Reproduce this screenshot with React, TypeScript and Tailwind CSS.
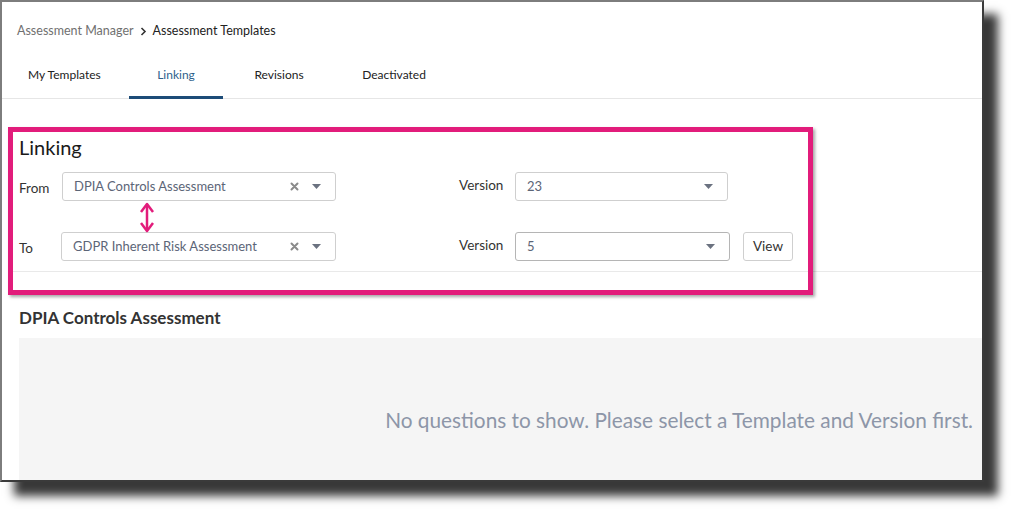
import React from "react";

function Caret() {
  return (
    <svg width="9" height="5" viewBox="0 0 9 5" className="shrink-0">
      <path d="M0 0 H9 L4.5 5 Z" fill="#6b7280" />
    </svg>
  );
}

function Cross() {
  return (
    <svg width="9" height="9" viewBox="0 0 9 9" className="shrink-0">
      <path d="M1.5 1.5 L7.5 7.5 M7.5 1.5 L1.5 7.5" stroke="#8a8a8a" strokeWidth="2" strokeLinecap="round" />
    </svg>
  );
}

function Select({ value, width, clear, darker }: { value: string; width: string; clear?: boolean; darker?: boolean }) {
  return (
    <div
      className={`${width} h-[29px] flex items-center rounded-[3px] border bg-white pl-[11px] pr-[14px] ${
        darker ? "border-[#b5b5b5]" : "border-[#cfcfcf]"
      }`}
    >
      <span className="flex-1 text-[13px] text-[#5c6577] leading-none">{value}</span>
      {clear && (
        <span className="mr-[13px] flex items-center">
          <Cross />
        </span>
      )}
      <Caret />
    </div>
  );
}

export default function App() {
  return (
    <div className="w-[1017px] h-[515px] bg-white relative overflow-hidden" style={{ fontFamily: "Lato, 'Liberation Sans', sans-serif" }}>
      <div className="relative w-[984px] h-[482px] border-2 border-t-[#7d7d7d] border-l-[#7d7d7d] border-r-[#3a3a3a] border-b-[#3a3a3a] bg-white shadow-[14px_14px_9px_rgba(0,0,0,0.78)] overflow-hidden flex flex-col">
        {/* breadcrumb */}
        <div className="h-[56px] flex items-center pl-[15px] pt-[3px] text-[12.5px]">
          <span className="text-[#707070]">Assessment Manager</span>
          <svg width="7" height="9" viewBox="0 0 7 9" className="mx-[6px]">
            <path d="M1.5 1 L5 4.5 L1.5 8" stroke="#333" strokeWidth="1.6" fill="none" />
          </svg>
          <span className="text-[#222]">Assessment Templates</span>
        </div>
        {/* tabs */}
        <div className="flex items-stretch gap-[4px] border-b border-[#e6e6e6] h-[41px] text-[12px]">
          <div className="w-[123px] pl-[26px] pb-[7px] flex items-center text-[#222]">My Templates</div>
          <div className="w-[94px] justify-center pb-[4px] flex items-center text-[#2e5f8c] border-b-[3px] border-[#1d4c78] mb-[-1px]">Linking</div>
          <div className="w-[104px] justify-center pb-[7px] flex items-center text-[#222]">Revisions</div>
          <div className="w-[118px] justify-center pb-[7px] flex items-center text-[#222]">Deactivated</div>
        </div>
        {/* linking section */}
        <div className="pl-[17px] pt-[38px]">
          <div className="text-[20px] leading-none text-[#1a1a1a]">Linking</div>
          <div className="mt-[15px] flex items-center h-[29px] text-[13.5px] text-[#333]">
            <span className="w-[43px] pt-[3px]">From</span>
            <Select value="DPIA Controls Assessment" width="w-[274px]" clear />
            <span className="ml-[123px] w-[56px] mb-[3px]">Version</span>
            <Select value="23" width="w-[213px]" />
          </div>
          <div className="mt-[31px] flex items-center h-[29px] text-[13.5px] text-[#333]">
            <span className="w-[42px] pt-[3px]">To</span>
            <Select value="GDPR Inherent Risk Assessment" width="w-[275px]" clear />
            <span className="ml-[123px] w-[56px] mb-[3px]">Version</span>
            <Select value="5" width="w-[215px]" darker />
            <button className="ml-[13px] w-[50px] h-[29px] rounded-[3px] border border-[#cfcfcf] bg-white text-[13.5px] text-[#333]">View</button>
          </div>
        </div>
        <div className="mt-[10px] ml-[8px] border-t border-[#e9e9e9]" />
        {/* template section */}
        <div className="pl-[17px] pt-[37px]">
          <div className="text-[17px] font-bold leading-none text-[#333]">DPIA Controls Assessment</div>
        </div>
        <div className="ml-[17px] mt-[12px] flex-1 bg-[#f5f5f5] flex items-center justify-end pr-[9px] pt-[22px]">
          <span className="text-[20.8px] text-[#8d96a8]">No questions to show. Please select a Template and Version first.</span>
        </div>

        {/* annotation overlays */}
        <div className="absolute left-[6px] top-[125px] w-[805px] h-[168px] border-[5px] border-[#e21c7b] shadow-[2px_2px_3px_rgba(0,0,0,0.35)]" />
        <svg className="absolute left-[137px] top-[200px]" width="16" height="31" viewBox="0 0 16 31">
          <path d="M8 3 V28" stroke="#e21c7b" strokeWidth="2.5" />
          <path d="M2 10 L8 2 L14 10" stroke="#e21c7b" strokeWidth="2.5" fill="none" strokeLinejoin="round" />
          <path d="M2 21 L8 29 L14 21" stroke="#e21c7b" strokeWidth="2.5" fill="none" strokeLinejoin="round" />
        </svg>
      </div>
    </div>
  );
}
